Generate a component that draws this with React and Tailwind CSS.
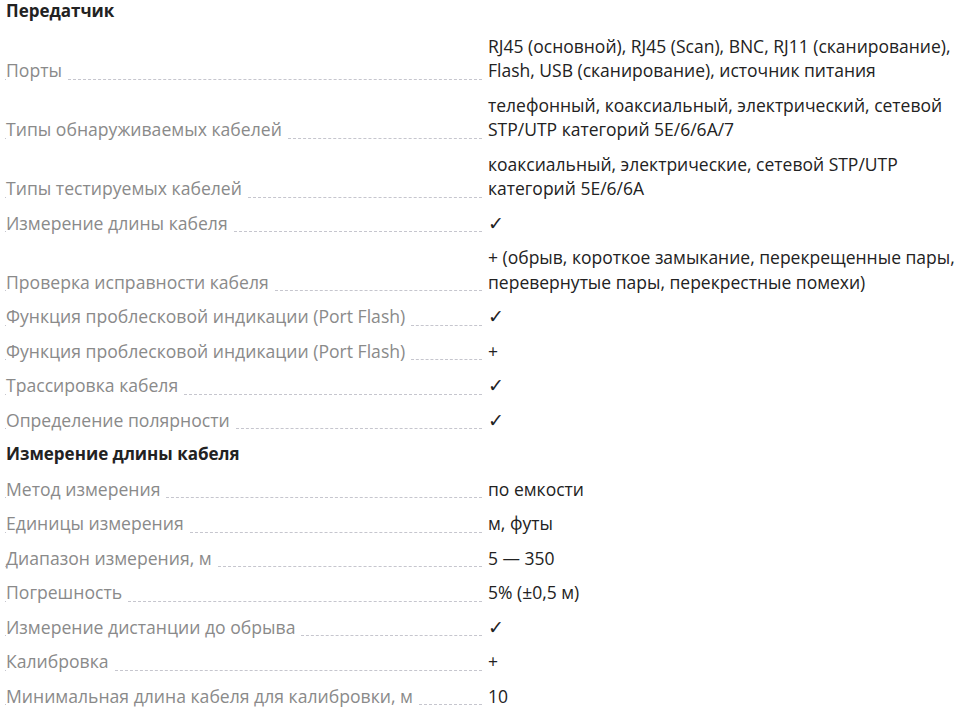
import React from "react";

const sections = [
  {
    title: "Передатчик",
    rows: [
      ["Порты", ["RJ45 (основной), RJ45 (Scan), BNC, RJ11 (сканирование),", "Flash, USB (сканирование), источник питания"]],
      ["Типы обнаруживаемых кабелей", ["телефонный, коаксиальный, электрический, сетевой", "STP/UTP категорий 5E/6/6A/7"]],
      ["Типы тестируемых кабелей", ["коаксиальный, электрические, сетевой STP/UTP", "категорий 5E/6/6A"]],
      ["Измерение длины кабеля", ["✓"]],
      ["Проверка исправности кабеля", ["+ (обрыв, короткое замыкание, перекрещенные пары,", "перевернутые пары, перекрестные помехи)"]],
      ["Функция проблесковой индикации (Port Flash)", ["✓"]],
      ["Функция проблесковой индикации (Port Flash)", ["+"]],
      ["Трассировка кабеля", ["✓"]],
      ["Определение полярности", ["✓"]],
    ],
  },
  {
    title: "Измерение длины кабеля",
    rows: [
      ["Метод измерения", ["по емкости"]],
      ["Единицы измерения", ["м, футы"]],
      ["Диапазон измерения, м", ["5 — 350"]],
      ["Погрешность", ["5% (±0,5 м)"]],
      ["Измерение дистанции до обрыва", ["✓"]],
      ["Калибровка", ["+"]],
      ["Минимальная длина кабеля для калибровки, м", ["10"]],
    ],
  },
];

function Row({ label, value }) {
  return (
    <div className="flex items-end gap-x-[6px] py-[5px]">
      <div className="flex w-[477px] shrink-0 items-end">
        <div className="mb-[3px] w-px shrink-0 border-b border-dashed border-[#c6c6ce]" />
        <span className="whitespace-nowrap text-[17.6px] leading-[24.5px] text-[#8a8a8a]">{label}</span>
        <div className="mb-[3px] ml-[6px] flex-1 border-b border-dashed border-[#c6c6ce]" />
      </div>
      <div className="min-w-0 flex-1 leading-[24.5px] text-[#222222]">
        {value.map((v, i) => (
          <div key={i} className="whitespace-nowrap">
            {v === "✓" ? <span className="inline-block text-[19px] leading-[24.5px]">✓</span> : v}
          </div>
        ))}
      </div>
    </div>
  );
}

export default function App() {
  return (
    <div
      className="min-h-[724px] w-[962px] overflow-hidden bg-white pl-[5px] text-[17.5px]"
      style={{ fontFamily: '"Open Sans", "Noto Sans", "DejaVu Sans", sans-serif' }}
    >
      {sections.map((s, si) => (
        <div key={si}>
          <div
            className={
              "pl-[1px] text-[17px] font-bold leading-[24.5px] text-[#222222] " +
              (si === 0 ? "mt-[-1px] pb-[5px]" : "py-[5px]")
            }
          >
            {s.title}
          </div>
          {s.rows.map((r, ri) => (
            <Row key={ri} label={r[0]} value={r[1]} />
          ))}
        </div>
      ))}
    </div>
  );
}
